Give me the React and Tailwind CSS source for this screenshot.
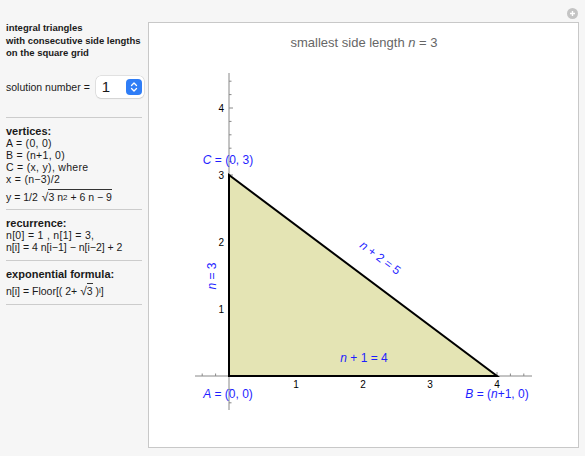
import React from 'react';

const blue = '#1f1fff';

function Sqrt({ children }) {
  return (
    <span className="inline-flex items-end">
      <span className="text-[12px] leading-none">√</span>
      <span className="border-t border-[#333] leading-[12px] pt-[1px]">{children}</span>
    </span>
  );
}

function Plot() {
  const ox = 229, oy = 376, u = 67;
  const ticks = [];
  for (let i = -2; i <= 22; i++) {
    if (i === 0) continue;
    const v = i / 5;
    const major = i % 5 === 0;
    const len = major ? 4 : 2.5;
    ticks.push(<line key={'x' + i} x1={ox + v * u} y1={oy} x2={ox + v * u} y2={oy - len} stroke="#888" strokeWidth="1" />);
    ticks.push(<line key={'y' + i} x1={ox} y1={oy - v * u} x2={ox + len} y2={oy - v * u} stroke="#888" strokeWidth="1" />);
  }
  return (
    <svg width="431" height="426" viewBox="148 22 431 426" className="block" style={{ fontFamily: '"Liberation Sans", Arial, sans-serif' }}>
      <text x="364" y="47" textAnchor="middle" fontSize="13" fill="#666">
        smallest side length <tspan fontStyle="italic">n</tspan> = 3
      </text>
      {ticks}
      <line x1="195" y1={oy} x2="532" y2={oy} stroke="#888" strokeWidth="1" />
      <line x1={ox} y1="73" x2={ox} y2="410" stroke="#888" strokeWidth="1" />
      <polygon points={`${ox},${oy} ${ox + 4 * u},${oy} ${ox},${oy - 3 * u}`} fill="#e4e4b4" stroke="#000" strokeWidth="2" />
      {[1, 2, 3, 4].map(k => (
        <text key={'xl' + k} x={ox + k * u} y="388" textAnchor="middle" fontSize="10" fill="#000">{k}</text>
      ))}
      {[1, 2, 3, 4].map(k => (
        <text key={'yl' + k} x="224" y={oy - k * u + 4} textAnchor="end" fontSize="10" fill="#000">{k}</text>
      ))}
      <g fontSize="12" fill={blue}>
        <text x="228" y="164" textAnchor="middle"><tspan fontStyle="italic">C</tspan> = (0, 3)</text>
        <text x="228" y="398" textAnchor="middle"><tspan fontStyle="italic">A</tspan> = (0, 0)</text>
        <text x="497" y="398" textAnchor="middle"><tspan fontStyle="italic">B</tspan> = (<tspan fontStyle="italic">n</tspan>+1, 0)</text>
        <text x="364" y="362" textAnchor="middle"><tspan fontStyle="italic">n</tspan> + 1 = 4</text>
        <text x="0" y="0" textAnchor="middle" transform="translate(216 276) rotate(-90)"><tspan fontStyle="italic">n</tspan> = 3</text>
        <text x="0" y="0" textAnchor="middle" transform="translate(378 261) rotate(36.87)"><tspan fontStyle="italic">n</tspan> + 2 = 5</text>
      </g>
    </svg>
  );
}

export default function App() {
  return (
    <div className="w-[585px] h-[456px] bg-[#f6f6f6] flex relative text-[#1a1a1a]" style={{ fontFamily: '"Liberation Sans", Arial, sans-serif' }}>
      <div className="w-[148px] shrink-0 pt-[22px] pl-[6px] pr-[4px] text-[10.5px] leading-[12px] tracking-[0.3px]">
        <div className="font-bold text-[9.5px] leading-[12.5px] whitespace-nowrap tracking-normal">
          <div>integral triangles</div>
          <div>with consecutive side lengths</div>
          <div>on the square grid</div>
        </div>
        <div className="flex items-center mt-[16px] h-[22px]">
          <span className="text-[10.5px] tracking-normal">solution number =</span>
          <div className="ml-[6px] w-[48px] h-[22px] bg-white rounded-[5px] shadow-[0_0_0_0.5px_#ccc,0_1px_1px_#ddd] flex items-center justify-between pl-[6px] pr-[2px]">
            <span className="text-[15px] leading-none">1</span>
            <div className="w-[16px] h-[16px] rounded-[4px] bg-[#2f7df6] flex items-center justify-center">
              <svg width="8" height="12" viewBox="0 0 8 12">
                <path d="M1.5 4.5 L4 2 L6.5 4.5 M1.5 7.5 L4 10 L6.5 7.5" fill="none" stroke="#fff" strokeWidth="1.3" strokeLinecap="round" strokeLinejoin="round" />
              </svg>
            </div>
          </div>
        </div>
        <div className="border-t border-[#ccc] mt-[19px] mr-[2px]" />
        <div className="pt-[7px] pb-[6px] whitespace-nowrap">
          <div className="font-bold text-[11px] tracking-normal">vertices:</div>
          <div>A = (0, 0)</div>
          <div>B = (n+1, 0)</div>
          <div>C = (x, y), where</div>
          <div>x = (n−3)/2</div>
          <div className="flex items-end gap-[4px] mt-[4px] tracking-normal">
            <span>y = 1/2</span>
            <Sqrt>3 n<sup className="text-[8px] relative -top-[1px]">2</sup> + 6 n − 9</Sqrt>
          </div>
        </div>
        <div className="border-t border-[#ccc] mr-[2px]" />
        <div className="pt-[7px] pb-[7px] whitespace-nowrap">
          <div className="font-bold text-[11px] tracking-normal">recurrence:</div>
          <div>n[0] = 1 , n[1] = 3,</div>
          <div className="tracking-normal">n[i] = 4 n[i−1] − n[i−2] + 2</div>
        </div>
        <div className="border-t border-[#ccc] mr-[2px]" />
        <div className="pt-[7px] pb-[7px] whitespace-nowrap">
          <div className="font-bold text-[11px] tracking-normal">exponential formula:</div>
          <div className="flex items-end mt-[3px] tracking-normal">
            <span>n[i] = Floor[( 2+&nbsp;</span>
            <Sqrt>3</Sqrt>
            <span>&nbsp;)<sup className="text-[8px] relative -top-[2px]">i</sup>]</span>
          </div>
        </div>
        <div className="border-t border-[#ccc] mr-[2px]" />
      </div>
      <div className="mt-[22px] mb-[8px] border border-[#c8c8c8] bg-white h-[426px] w-[431px] overflow-hidden">
        <div className="-m-px">
          <Plot />
        </div>
      </div>
      <div className="absolute right-[7px] top-[8px] w-[11px] h-[11px] rounded-full bg-[#c4c4c4] flex items-center justify-center">
        <svg width="7" height="7" viewBox="0 0 7 7"><path d="M3.5 1v5M1 3.5h5" stroke="#fff" strokeWidth="1.4" /></svg>
      </div>
    </div>
  );
}
